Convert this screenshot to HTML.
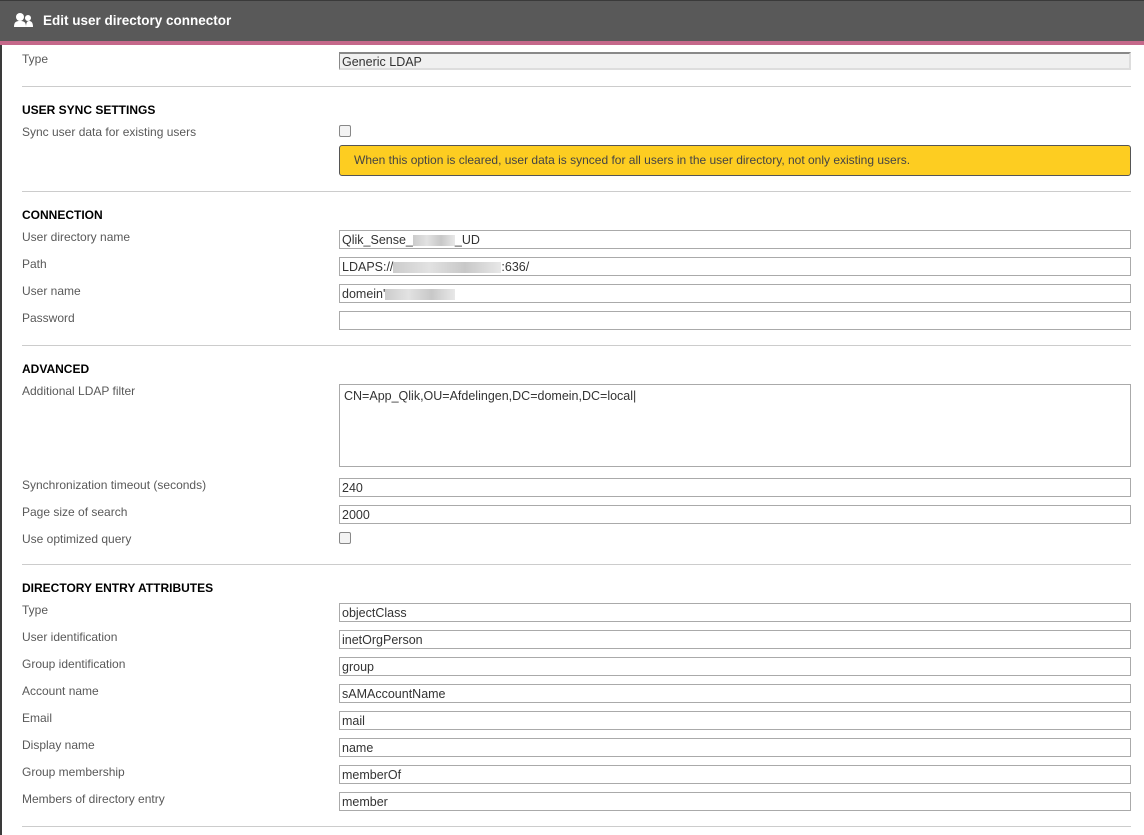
<!DOCTYPE html>
<html><head><meta charset="utf-8"><style>
*{margin:0;padding:0;box-sizing:border-box}
body{width:1144px;height:835px;background:#fff;position:relative;overflow:hidden;font-family:"Liberation Sans",Arial,sans-serif}
.hdr{position:absolute;left:0;top:0;width:1144px;height:41px;background:#595959;border-top:1px solid #3a3a3a}
.hdr .t{position:absolute;left:43px;top:12px;color:#fff;font-weight:bold;font-size:13.5px}
.pink{position:absolute;left:0;top:41px;width:1144px;height:4px;background:#c5688a}
.lb{position:absolute;left:0;top:45px;width:2px;height:790px;background:#3a3a3a}
.l{position:absolute;left:22px;font-size:12px;color:#595959}
.h{position:absolute;left:22px;font-size:12px;font-weight:bold;color:#000}
.i{position:absolute;left:339px;width:792px;height:19px;border:1px solid #aaa;font-size:12.5px;color:#333;padding:1px 0 0 2px;line-height:16px;background:#fff}
.sep{position:absolute;left:22px;width:1109px;height:1px;background:#ccc}
.cb{position:absolute;left:339px;width:12px;height:12px;border:1px solid #888;border-radius:2px;background:#f3f3f3}
.y{position:absolute;left:339px;top:145px;width:792px;height:31px;background:#fdcd21;border:1px solid #555;border-radius:3px;font-size:12px;color:#444;padding:7px 0 0 14px}
.bl{display:inline-block;width:60px;height:11px;background:linear-gradient(90deg,#ccc,#e2e2e2,#c8c8c8,#e8e8e8);vertical-align:middle}
</style></head><body>
<div class="hdr"><svg style="position:absolute;left:14px;top:11px" width="22" height="16" viewBox="0 0 22 16"><circle cx="6" cy="5" r="4" fill="#fff"/><path d="M0 15c0-5 2-6 6-6s6 1 6 6z" fill="#fff"/><circle cx="14" cy="6" r="3" fill="#fff"/><path d="M12 15c0-4 1-6 3-6s4 1 4 6z" fill="#fff"/></svg><div class="t">Edit user directory connector</div></div>
<div class="pink"></div><div class="lb"></div>

<div class="l" style="top:52px">Type</div>
<div class="i" style="top:52px;background:#f0f0f0;border-top:2px solid #888;border-left:1px solid #888;border-right:2px solid #ddd;border-bottom:2px solid #ddd;height:18px;padding-top:0">Generic LDAP</div>
<div class="sep" style="top:86px"></div>

<div class="h" style="top:103px">USER SYNC SETTINGS</div>
<div class="l" style="top:125px">Sync user data for existing users</div>
<div class="cb" style="top:125px"></div>
<div class="y">When this option is cleared, user data is synced for all users in the user directory, not only existing users.</div>
<div class="sep" style="top:191px"></div>

<div class="h" style="top:208px">CONNECTION</div>
<div class="l" style="top:230px">User directory name</div><div class="i" style="top:230px">Qlik_Sense_<span class="bl" style="width:42px"></span>_UD</div>
<div class="l" style="top:257px">Path</div><div class="i" style="top:257px">LDAPS://<span class="bl" style="width:108px"></span>:636/</div>
<div class="l" style="top:284px">User name</div><div class="i" style="top:284px">domein'<span class="bl" style="width:70px"></span></div>
<div class="l" style="top:311px">Password</div><div class="i" style="top:311px"></div>
<div class="sep" style="top:345px"></div>

<div class="h" style="top:362px">ADVANCED</div>
<div class="l" style="top:384px">Additional LDAP filter</div>
<div class="i" style="top:384px;height:83px;padding:3px 0 0 4px">CN=App_Qlik,OU=Afdelingen,DC=domein,DC=local|</div>
<div class="l" style="top:478px">Synchronization timeout (seconds)</div><div class="i" style="top:478px">240</div>
<div class="l" style="top:505px">Page size of search</div><div class="i" style="top:505px">2000</div>
<div class="l" style="top:532px">Use optimized query</div><div class="cb" style="top:532px"></div>
<div class="sep" style="top:564px"></div>

<div class="h" style="top:581px">DIRECTORY ENTRY ATTRIBUTES</div>
<div class="l" style="top:603px">Type</div><div class="i" style="top:603px">objectClass</div>
<div class="l" style="top:630px">User identification</div><div class="i" style="top:630px">inetOrgPerson</div>
<div class="l" style="top:657px">Group identification</div><div class="i" style="top:657px">group</div>
<div class="l" style="top:684px">Account name</div><div class="i" style="top:684px">sAMAccountName</div>
<div class="l" style="top:711px">Email</div><div class="i" style="top:711px">mail</div>
<div class="l" style="top:738px">Display name</div><div class="i" style="top:738px">name</div>
<div class="l" style="top:765px">Group membership</div><div class="i" style="top:765px">memberOf</div>
<div class="l" style="top:792px">Members of directory entry</div><div class="i" style="top:792px">member</div>
<div class="sep" style="top:826px"></div>
</body></html>
